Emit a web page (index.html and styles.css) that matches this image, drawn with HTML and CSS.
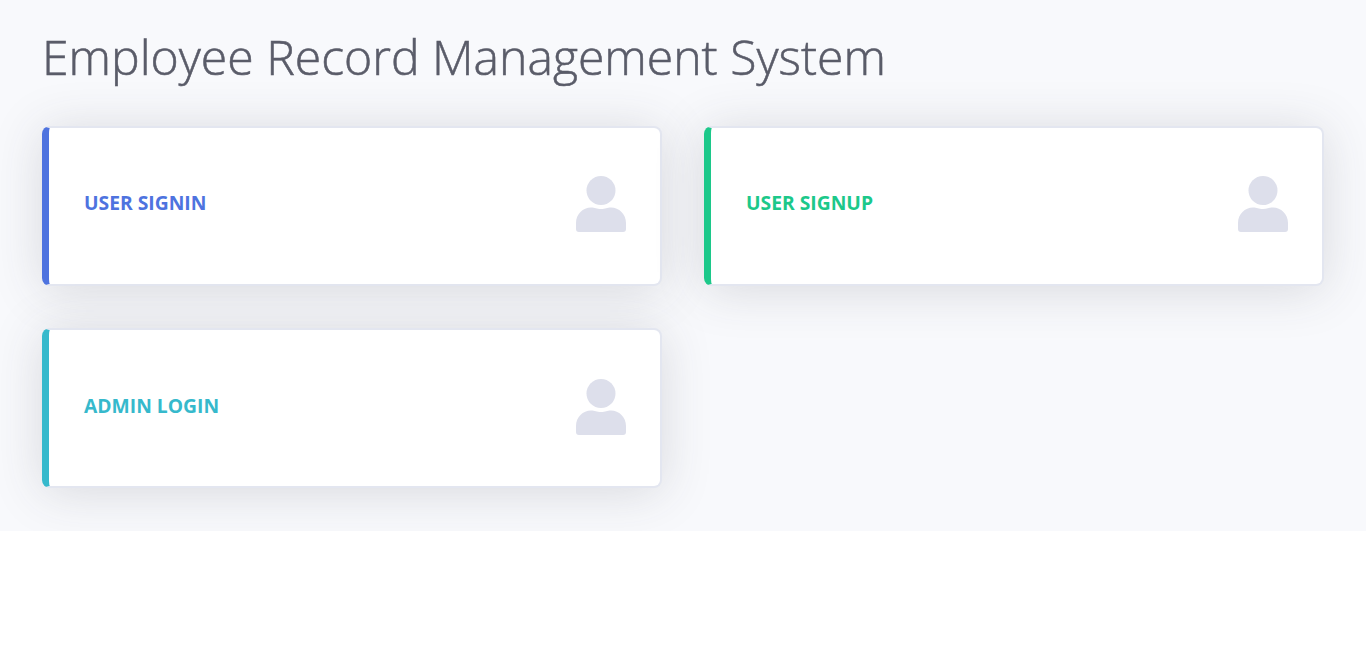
FILE: index.html
```html
<!DOCTYPE html>
<html lang="en">
<head>
    <meta charset="UTF-8">
    <meta name="viewport" content="width=device-width, initial-scale=1.0">
    <title>Employee Record Management System</title>
    <link rel="stylesheet" href="styles.css">
</head>
<body>
<div class="page">
    <h1 class="page-title">Employee Record Management System</h1>
    <div class="card-grid">
        <a class="card card-blue" href="#">
            <span class="card-label">User Signin</span>
            <svg class="card-icon" viewBox="0 0 50 56"><circle cx="25" cy="14.5" r="14.5"/><path d="M0 53V47C0 38 7 31.500 15 31.500C19 31.500 20.500 33 25 33C29.500 33 31 31.500 35 31.500C43 31.500 50 38 50 47V53C50 55 49 56 47 56H3C1 56 0 55 0 53Z"/></svg>
        </a>
        <a class="card card-green" href="#">
            <span class="card-label">User Signup</span>
            <svg class="card-icon" viewBox="0 0 50 56"><circle cx="25" cy="14.5" r="14.5"/><path d="M0 53V47C0 38 7 31.500 15 31.500C19 31.500 20.500 33 25 33C29.500 33 31 31.500 35 31.500C43 31.500 50 38 50 47V53C50 55 49 56 47 56H3C1 56 0 55 0 53Z"/></svg>
        </a>
        <a class="card card-cyan" href="#">
            <span class="card-label">Admin Login</span>
            <svg class="card-icon" viewBox="0 0 50 56"><circle cx="25" cy="14.5" r="14.5"/><path d="M0 53V47C0 38 7 31.500 15 31.500C19 31.500 20.500 33 25 33C29.500 33 31 31.500 35 31.500C43 31.500 50 38 50 47V53C50 55 49 56 47 56H3C1 56 0 55 0 53Z"/></svg>
        </a>
    </div>
</div>
</body>
</html>
```

FILE: styles.css
```css
body {
    font-family: 'Open Sans', 'Noto Sans', sans-serif;
    margin: 0;
    background-color: #fff;
}

.page {
    background-color: #f8f9fc;
    padding: 27px 42px 42px;
    height: 531px;
    box-sizing: border-box;
}

.page-title {
    font-size: 48.1px;
    font-weight: 300;
    -webkit-text-stroke: 0.55px #5a5c69;
    line-height: 60px;
    color: #5a5c69;
    margin: 0 0 38.6px;
}

.card-grid {
    display: grid;
    grid-template-columns: 1fr 1fr;
    gap: 42px;
}

.card {
    display: flex;
    justify-content: space-between;
    align-items: center;
    height: 160.4px;
    box-sizing: border-box;
    padding: 0 34px 0 35px;
    background-color: #fff;
    border: 2px solid #e3e6f0;
    border-left-width: 7px;
    border-radius: 8px;
    box-shadow: 0 4px 50px rgba(58, 59, 69, 0.17);
    text-decoration: none;
}

.card-blue {
    border-left-color: #4e73df;
    color: #4e73df;
}

.card-green {
    border-left-color: #1cc88a;
    color: #1cc88a;
}

.card-cyan {
    border-left-color: #36b9cc;
    color: #36b9cc;
}

.card-label {
    font-size: 19.3px;
    font-weight: 700;
    text-transform: uppercase;
    margin-top: -6px;
}

.card-icon {
    width: 50px;
    height: 56px;
    margin-top: -3px;
    fill: #dddfeb;
}
```
